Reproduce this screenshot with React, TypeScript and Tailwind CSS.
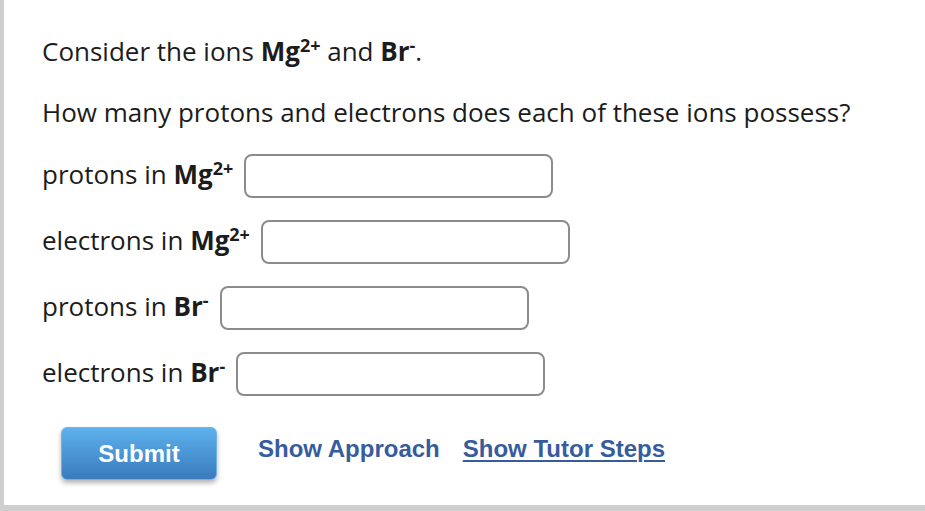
export default function App() {
  const Mg = () => (
    <b className="font-bold">
      Mg<sup className="text-[18px]">2+</sup>
    </b>
  );
  const Br = () => (
    <b className="font-bold">
      Br<sup className="text-[18px]">-</sup>
    </b>
  );

  const rows = [
    { label: "protons in", ion: <Mg /> },
    { label: "electrons in", ion: <Mg /> },
    { label: "protons in", ion: <Br /> },
    { label: "electrons in", ion: <Br /> },
  ];

  return (
    <div className="w-[925px] h-[511px] bg-white border-l-4 border-b-[6px] border-[#cfcfcf] overflow-hidden">
      <div className="pl-[38px] pt-[33px] text-[26px] leading-9 text-[#1c1c1c] font-['Open_Sans',sans-serif]">
        <p>
          Consider the ions <Mg /> and <Br />.
        </p>
        <p className="mt-[25px]">How many protons and electrons does each of these ions possess?</p>

        <div className="mt-[24px] flex flex-col gap-[22px]">
          {rows.map((r, i) => (
            <div key={i} className="flex items-center gap-[11px]">
              <span className="-mt-[5px]">
                {r.label} {r.ion}
              </span>
              <input
                type="text"
                className="w-[309px] h-[44px] rounded-[8px] border-2 border-[#8c8c8c] bg-white px-2 outline-none"
              />
            </div>
          ))}
        </div>

        <div className="mt-[31px] ml-[19px] flex items-start font-['Liberation_Sans',Arial,sans-serif] font-bold text-[24px]">
          <button className="w-[156px] h-[53px] rounded-[6px] border border-[#6db4ea] bg-gradient-to-b from-[#5db1ec] to-[#3a7bbd] text-white shadow-[0_3px_5px_rgba(0,0,0,0.3)]">
            Submit
          </button>
          <span className="ml-[41px] mt-[8px] leading-7 text-[#375c9e]">Show Approach</span>
          <span className="ml-[23px] mt-[8px] leading-7 text-[#375c9e] underline underline-offset-[3px] decoration-2">
            Show Tutor Steps
          </span>
        </div>
      </div>
    </div>
  );
}
